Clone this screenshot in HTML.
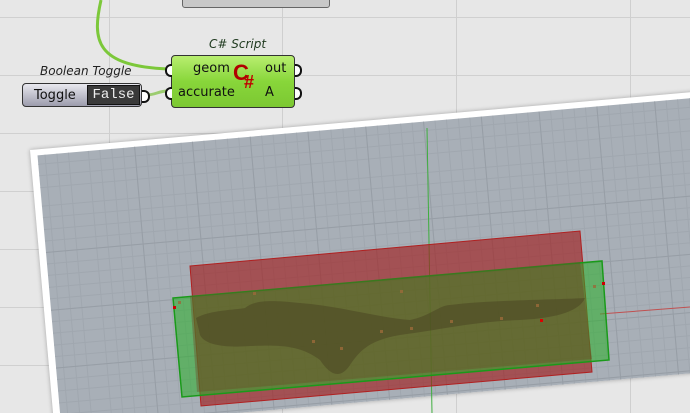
<!DOCTYPE html>
<html style="width:690px;height:413px;overflow:hidden"><head><style>
*{margin:0;padding:0}
html,body{width:690px;height:413px;overflow:hidden}
body{position:relative;background:#e7e7e7;font-family:"DejaVu Sans","Liberation Sans",sans-serif}
.bg{position:absolute;inset:0;background:
linear-gradient(90deg,transparent 109px,#cfcfcf 109px,#cfcfcf 110px,transparent 110px),
linear-gradient(90deg,transparent 282px,#cfcfcf 282px,#cfcfcf 283px,transparent 283px),
linear-gradient(90deg,transparent 456px,#cfcfcf 456px,#cfcfcf 457px,transparent 457px),
linear-gradient(90deg,transparent 630px,#cfcfcf 630px,#cfcfcf 631px,transparent 631px),
repeating-linear-gradient(180deg,transparent 0 17px,#d0d0d0 17px 18px,transparent 18px 58px);}
.clip{position:absolute;left:0;top:0;width:690px;height:413px;overflow:hidden;clip-path:inset(0)}
.frame{position:absolute;left:30px;top:150px;width:700px;height:280px;background:#fff;transform:rotate(-5deg);transform-origin:0 0;box-shadow:0 0 4px rgba(0,0,0,.3)}
.vp{position:absolute;left:7px;top:6px;right:0;bottom:0;background-color:#a8afb7;background-image:
repeating-linear-gradient(90deg,transparent 0 57px,#979ea6 57px 58px),
repeating-linear-gradient(180deg,transparent 0 57px,#979ea6 57px 58px),
repeating-linear-gradient(90deg,transparent 0 10.6px,#a0a7af 10.6px 11.6px),
repeating-linear-gradient(180deg,transparent 0 10.6px,#a0a7af 10.6px 11.6px);background-position:40px 40px}
.lbl{position:absolute;font-style:italic;font-size:12px;color:#222}
</style></head><body>
<div class="clip">
<div class="bg"></div>
<div style="position:absolute;left:182px;top:-6px;width:146px;height:12px;border:1px solid #666;border-radius:3px;background:#c8c8c8"></div>
<svg width="690" height="413" style="position:absolute;left:0;top:0">
<path d="M101 0 C92 40,95 66,168 69" stroke="#7cc83a" stroke-width="3" fill="none"/>
<path d="M146 95 C156 95,158 91,168 91" stroke="#9ccc70" stroke-width="3" fill="none"/>
</svg>
<div class="lbl" style="left:40px;top:64px">Boolean Toggle</div>
<div style="position:absolute;left:22px;top:83px;width:120px;height:24px;border:1px solid #333;border-radius:4px;background:linear-gradient(#e8e8ee,#9c9cac);box-sizing:border-box"></div>
<div style="position:absolute;left:34px;top:88px;font-size:13px;color:#111">Toggle</div>
<div style="position:absolute;left:87px;top:85px;width:53px;height:20px;background:#3a3a3a;border:1px solid #111;box-sizing:border-box;font-family:'Liberation Mono',monospace;font-size:14px;color:#eee;text-align:center;line-height:18px">False</div>
<div style="position:absolute;left:142px;top:90px;width:6px;height:9px;border:2px solid #111;border-left:none;border-radius:0 6px 6px 0;background:#fff"></div>
<div class="lbl" style="left:209px;top:37px;color:#1f3a1f">C# Script</div>
<div style="position:absolute;left:171px;top:55px;width:124px;height:53px;border:1px solid #333;border-radius:4px;background:linear-gradient(#b8ee70,#88d63a 50%,#7cc832);box-sizing:border-box"></div>
<div style="position:absolute;left:193px;top:61px;font-size:13px;color:#111">geom</div>
<div style="position:absolute;left:178px;top:85px;font-size:13px;color:#111">accurate</div>
<div style="position:absolute;left:265px;top:61px;font-size:13px;color:#111">out</div>
<div style="position:absolute;left:265px;top:85px;font-size:13px;color:#111">A</div>
<div style="position:absolute;left:233px;top:60px;font-size:22px;font-weight:bold;color:#b00000;font-family:'Liberation Sans',sans-serif">C</div>
<div style="position:absolute;left:244px;top:72px;font-size:18px;font-weight:bold;color:#c00000;font-family:'Liberation Sans',sans-serif">#</div>
<div style="position:absolute;left:165px;top:64px;width:5px;height:9px;border:2px solid #111;border-right:none;border-radius:6px 0 0 6px;background:#fff"></div>
<div style="position:absolute;left:165px;top:87px;width:5px;height:9px;border:2px solid #111;border-right:none;border-radius:6px 0 0 6px;background:#fff"></div>
<div style="position:absolute;left:295px;top:64px;width:5px;height:9px;border:2px solid #111;border-left:none;border-radius:0 6px 6px 0;background:#fff"></div>
<div style="position:absolute;left:295px;top:87px;width:5px;height:9px;border:2px solid #111;border-left:none;border-radius:0 6px 6px 0;background:#fff"></div>
<div class="frame"><div class="vp"></div></div>
<svg width="690" height="413" style="position:absolute;left:0;top:0">
<line x1="427" y1="128" x2="432" y2="413" stroke="#3fae3f" stroke-width="1"/>
<line x1="600" y1="314" x2="690" y2="307" stroke="#c05050" stroke-width="1"/>
<polygon points="190,266 580,231 592,372 201,406" fill="rgba(160,30,30,0.65)" stroke="#b02020" stroke-width="1"/>
<polygon points="173,298 602,261 609,360 182,397" fill="rgba(40,175,40,0.55)" stroke="#1a9a1a" stroke-width="1.5"/>
<polygon points="190,296 580,262 592,359 197,392" fill="rgba(110,70,40,0.4)"/>
<path d="M196 318 C210 310,235 310,245 308 C255 300,270 300,300 303 C340 306,380 318,410 320 C430 316,440 305,450 305 C490 300,550 300,585 298 C580 310,560 318,520 320 C470 322,440 330,400 335 C370 340,360 350,350 365 C340 380,330 375,320 360 C300 345,280 345,250 346 C225 348,205 345,200 335 Z" fill="rgba(60,50,25,0.35)"/>
<g fill="#9b6a3a" opacity=".8"><rect x="253" y="292" width="3" height="3"/><rect x="312" y="340" width="3" height="3"/><rect x="380" y="330" width="3" height="3"/><rect x="410" y="327" width="3" height="3"/><rect x="450" y="320" width="3" height="3"/><rect x="500" y="317" width="3" height="3"/><rect x="536" y="304" width="3" height="3"/><rect x="593" y="285" width="3" height="3"/><rect x="178" y="301" width="3" height="3"/><rect x="340" y="347" width="3" height="3"/><rect x="400" y="290" width="3" height="3"/></g>
<rect x="540" y="319" width="3" height="3" fill="#d00"/>
<rect x="602" y="282" width="3" height="3" fill="#c00"/>
<rect x="173" y="306" width="3" height="3" fill="#c00"/>
</svg>
</div>
</body></html>
